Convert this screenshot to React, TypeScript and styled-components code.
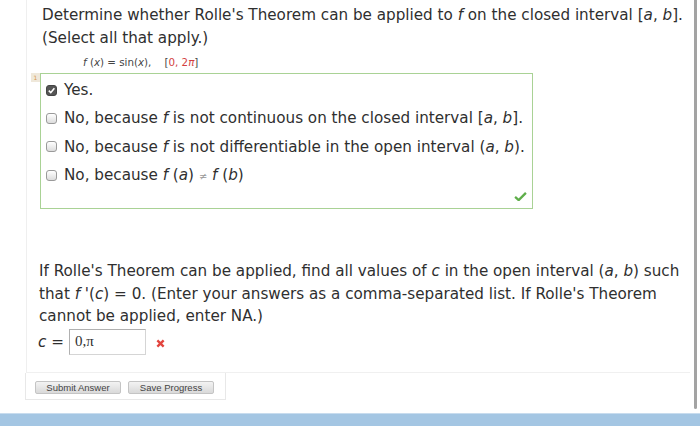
import React, { FC } from 'react';
import styled, { createGlobalStyle } from 'styled-components';

const GlobalStyle = createGlobalStyle`
    html, body {
        margin: 0;
        padding: 0;
        background: #ffffff;
    }
    body {
        font-family: 'DejaVu Sans', Verdana, sans-serif;
        color: #2f2f2f;
        overflow: hidden;
    }
`;

const App: FC = () => {
    const options = [
        { checked: true, text: <>Yes.</> },
        {
            checked: false,
            text: (
                <>
                    No, because <i>f</i> is not continuous on the closed interval [<i>a</i>, <i>b</i>].
                </>
            ),
        },
        {
            checked: false,
            text: (
                <>
                    No, because <i>f</i> is not differentiable in the open interval (<i>a</i>, <i>b</i>).
                </>
            ),
        },
        {
            checked: false,
            text: (
                <>
                    No, because <i>f</i> (<i>a</i>) <Neq>≠</Neq> <i>f</i> (<i>b</i>)
                </>
            ),
        },
    ];

    return (
        <>
            <GlobalStyle />
            <Screen>
                <Main>
                    <Question>
                        <Prompt>
                            Determine whether Rolle's Theorem can be applied to <i>f</i> on the closed interval [<i>a</i>, <i>b</i>].
                            <br />
                            (Select all that apply.)
                        </Prompt>
                        <Formula>
                            <i>f</i> (<i>x</i>) = sin(<i>x</i>),&nbsp;&nbsp;&nbsp; [<Red>0, 2<i>π</i></Red>]
                        </Formula>
                        <AnswerRow>
                            <Marker>1</Marker>
                            <AnswerBox>
                                {options.map((o, i) => (
                                    <Option key={i}>
                                        <Box $checked={o.checked}>
                                            {o.checked && (
                                                <svg width="9" height="9" viewBox="0 0 10 10">
                                                    <path d="M2 5.2 L4.2 7.4 L8.2 2.6" stroke="#fff" strokeWidth="1.8" fill="none" />
                                                </svg>
                                            )}
                                        </Box>
                                        <span>{o.text}</span>
                                    </Option>
                                ))}
                                <Tick viewBox="0 0 14 10" width="13" height="9">
                                    <path d="M1 5.5 L5 9 L13 1" stroke="#5fae4a" strokeWidth="2.6" fill="none" />
                                </Tick>
                            </AnswerBox>
                        </AnswerRow>
                        <Prompt2>
                            If Rolle's Theorem can be applied, find all values of <i>c</i> in the open interval (<i>a</i>, <i>b</i>) such
                            <br />
                            that <i>f</i> '(<i>c</i>) = 0. (Enter your answers as a comma-separated list. If Rolle's Theorem
                            <br />
                            cannot be applied, enter NA.)
                        </Prompt2>
                        <EntryRow>
                            <span>
                                <i>c</i> =
                            </span>
                            <Input>0,π</Input>
                            <Cross viewBox="0 0 10 10" width="9" height="9">
                                <path d="M1.5 1.5 L8.5 8.5 M8.5 1.5 L1.5 8.5" stroke="#e2453e" strokeWidth="2.6" />
                            </Cross>
                        </EntryRow>
                    </Question>
                    <Footer>
                        <Buttons>
                            <Button>Submit Answer</Button>
                            <Button>Save Progress</Button>
                        </Buttons>
                    </Footer>
                </Main>
                <Scrollbar />
            </Screen>
            <BlueBar />
        </>
    );
};

const Screen = styled.div`
    position: relative;
    height: 413px;
    overflow: hidden;
`;

const Main = styled.div`
    display: flex;
    flex-direction: column;
    margin-left: 26px;
    width: 664px;
    height: 413px;
`;

const Question = styled.div`
    display: flex;
    flex-direction: column;
    height: 373px;
    border-left: 1px solid #efefef;
    border-bottom: 1px solid #f0f0f0;
    box-sizing: border-box;
`;

const Prompt = styled.div`
    margin: 4px 0 0 15px;
    font-size: 15.2px;
    line-height: 22.5px;
    white-space: nowrap;
`;

const Formula = styled.div`
    margin: 7px 0 0 56px;
    font-size: 10.3px;
    line-height: 12px;
    color: #444;
    white-space: nowrap;
`;

const Red = styled.span`
    color: #d33f3f;
`;

const AnswerRow = styled.div`
    display: flex;
    margin: 5px 0 0 4px;
`;

const Marker = styled.div`
    width: 9px;
    height: 9px;
    background: #efe8da;
    color: #d89a4a;
    font-size: 6px;
    line-height: 9px;
    text-align: center;
`;

const AnswerBox = styled.div`
    position: relative;
    display: flex;
    flex-direction: column;
    width: 493px;
    height: 136px;
    border: 1px solid #a9d295;
    box-sizing: border-box;
    padding: 2px 0 0 5px;
`;

const Option = styled.div`
    display: flex;
    align-items: center;
    gap: 7px;
    height: 28.3px;
    font-size: 15.2px;
    white-space: nowrap;
`;

const Box = styled.span<{ $checked: boolean }>`
    display: inline-flex;
    align-items: center;
    justify-content: center;
    width: 11px;
    height: 11px;
    border-radius: 3px;
    box-sizing: border-box;
    border: 1px solid ${(p) => (p.$checked ? '#444' : '#9a9a9a')};
    background: ${(p) => (p.$checked ? '#555' : 'linear-gradient(#ffffff, #dcdcdc)')};
`;

const Neq = styled.span`
    font-size: 10px;
    color: #999;
`;

const Tick = styled.svg`
    position: absolute;
    right: 5px;
    bottom: 7px;
`;

const Prompt2 = styled.div`
    margin: 51px 0 0 12px;
    font-size: 15.2px;
    line-height: 22.5px;
    white-space: nowrap;
`;

const EntryRow = styled.div`
    display: flex;
    align-items: center;
    gap: 5px;
    margin: 1px 0 0 11px;
    font-size: 15.2px;
`;

const Input = styled.div`
    width: 77px;
    height: 26px;
    box-sizing: border-box;
    border: 1px solid #b0b0b0;
    border-right-color: #d5d5d5;
    border-bottom-color: #d5d5d5;
    padding: 3px 5px;
    font-family: 'Liberation Serif', 'Times New Roman', serif;
    font-size: 15px;
    margin-right: 5px;
`;

const Cross = styled.svg`
    margin-top: 3px;
`;

const Footer = styled.div`
    display: flex;
`;

const Buttons = styled.div`
    display: flex;
    gap: 7px;
    width: 201px;
    height: 27px;
    box-sizing: border-box;
    padding: 8px 0 0 9px;
    border: 1px solid #e8e8e8;
    border-top: none;
    margin-left: -1px;
`;

const Button = styled.button`
    width: 86px;
    height: 13px;
    padding: 0;
    border: 1px solid #c4c4c4;
    border-radius: 2px;
    background: linear-gradient(#f3f3f3, #d9d9d9);
    font-family: 'Liberation Sans', Arial, sans-serif;
    font-size: 9.5px;
    color: #444;
    line-height: 11px;
`;

const Scrollbar = styled.div`
    position: absolute;
    top: 0;
    left: 694px;
    width: 3px;
    height: 409px;
    border-radius: 0 0 2px 2px;
    background: #a3a3a3;
`;

const BlueBar = styled.div`
    height: 13px;
    background: #a4c6e3;
    border-top: 1px solid #c8dcee;
    box-sizing: border-box;
`;

export default App;
